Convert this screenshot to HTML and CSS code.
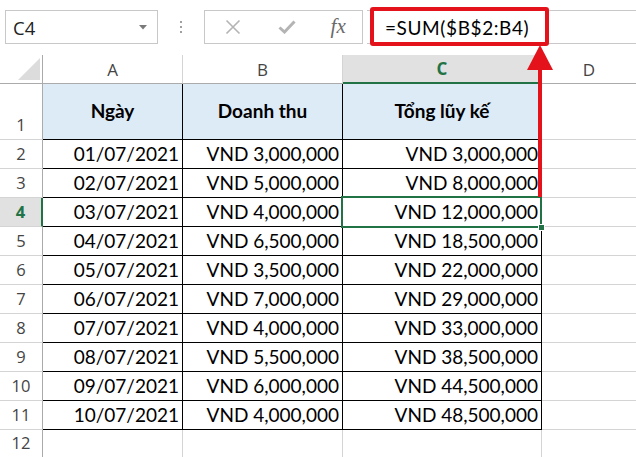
FILE: index.html
```html
<!DOCTYPE html>
<html lang="vi">
<head>
<meta charset="utf-8">
<title>Tổng lũy kế</title>
<link rel="stylesheet" href="styles.css">
</head>
<body>
<div class="app">
  <div class="formula-row">
    <div class="namebox">
      <span class="namebox-text">C4</span>
      <svg class="dd" width="8" height="5" viewBox="0 0 8 5"><path d="M0 0H8L4 4.5Z" fill="#7a7a7a"/></svg>
    </div>
    <div class="grip"><i></i><i></i><i></i></div>
    <div class="fbtns">
      <span class="fbtn b1"><svg width="16" height="16" viewBox="0 0 16 16"><path d="M1.5 1.5L14.5 14.5M14.5 1.5L1.5 14.5" stroke="#b4b4b4" stroke-width="1.6" fill="none"/></svg></span>
      <span class="fbtn b2"><svg width="18" height="14" viewBox="0 0 18 14"><path d="M1.5 7.5L6.5 12L16.5 1.5" stroke="#b4b4b4" stroke-width="3" fill="none"/></svg></span>
      <span class="fbtn b3 fx">fx</span>
    </div>
    <div class="finput"><span class="ftext">=SUM($B$2:B4)</span></div>
  </div>

  <div class="grid">
    <div class="cell corner"><svg width="42" height="28" viewBox="0 0 42 28"><path d="M18 25H40V3Z" fill="#dcdcdc"/></svg></div>
    <div class="cell ch">A</div>
    <div class="cell ch">B</div>
    <div class="cell ch ch-sel">C</div>
    <div class="cell ch ch-last">D</div>

    <div class="cell rh">1</div>
    <div class="cell t head">Ngày</div>
    <div class="cell t head">Doanh thu</div>
    <div class="cell t head">Tổng lũy kế</div>
    <div class="cell g"></div>

    <div class="cell rh">2</div>
    <div class="cell t num">01/07/2021</div>
    <div class="cell t num">VND 3,000,000</div>
    <div class="cell t num">VND 3,000,000</div>
    <div class="cell g"></div>

    <div class="cell rh">3</div>
    <div class="cell t num">02/07/2021</div>
    <div class="cell t num">VND 5,000,000</div>
    <div class="cell t num">VND 8,000,000</div>
    <div class="cell g"></div>

    <div class="cell rh rh-sel">4</div>
    <div class="cell t num">03/07/2021</div>
    <div class="cell t num">VND 4,000,000</div>
    <div class="cell t num active">VND 12,000,000<span class="handle"></span></div>
    <div class="cell g"></div>

    <div class="cell rh">5</div>
    <div class="cell t num">04/07/2021</div>
    <div class="cell t num">VND 6,500,000</div>
    <div class="cell t num">VND 18,500,000</div>
    <div class="cell g"></div>

    <div class="cell rh">6</div>
    <div class="cell t num">05/07/2021</div>
    <div class="cell t num">VND 3,500,000</div>
    <div class="cell t num">VND 22,000,000</div>
    <div class="cell g"></div>

    <div class="cell rh">7</div>
    <div class="cell t num">06/07/2021</div>
    <div class="cell t num">VND 7,000,000</div>
    <div class="cell t num">VND 29,000,000</div>
    <div class="cell g"></div>

    <div class="cell rh">8</div>
    <div class="cell t num">07/07/2021</div>
    <div class="cell t num">VND 4,000,000</div>
    <div class="cell t num">VND 33,000,000</div>
    <div class="cell g"></div>

    <div class="cell rh">9</div>
    <div class="cell t num">08/07/2021</div>
    <div class="cell t num">VND 5,500,000</div>
    <div class="cell t num">VND 38,500,000</div>
    <div class="cell g"></div>

    <div class="cell rh">10</div>
    <div class="cell t num">09/07/2021</div>
    <div class="cell t num">VND 6,000,000</div>
    <div class="cell t num">VND 44,500,000</div>
    <div class="cell g"></div>

    <div class="cell rh">11</div>
    <div class="cell t num">10/07/2021</div>
    <div class="cell t num">VND 4,000,000</div>
    <div class="cell t num">VND 48,500,000</div>
    <div class="cell g"></div>

    <div class="cell rh">12</div>
    <div class="cell g"></div>
    <div class="cell g"></div>
    <div class="cell g"></div>
    <div class="cell g"></div>
  </div>

  <div class="callout"></div>
  <svg class="arrow" width="32" height="155" viewBox="0 0 32 155">
    <path d="M16 1L3 26H29Z" fill="#e4121b"/>
    <rect x="14" y="25" width="4" height="128" fill="#e4121b"/>
  </svg>
</div>
</body>
</html>
```
FILE: styles.css
```css
* { box-sizing: border-box; }
html, body { margin: 0; padding: 0; background: #fff; }
.app {
  position: relative;
  width: 636px;
  height: 457px;
  overflow: hidden;
  font-family: Lato, "Noto Sans", sans-serif;
  color: #000;
}

/* formula bar */
.formula-row {
  display: flex;
  padding-top: 10px;
  height: 44px;
}
.namebox {
  margin-left: 5px;
  width: 153px;
  height: 34px;
  border: 1px solid #c8c8c8;
  display: flex;
  align-items: center;
  justify-content: space-between;
  padding: 0 10px 0 7px;
}
.namebox-text {
  font-family: "Open Sans", sans-serif;
  font-size: 18.5px;
  color: #222;
}
.dd { margin-top: 1px; }
.grip {
  width: 46px;
  display: flex;
  flex-direction: column;
  align-items: center;
  justify-content: center;
  gap: 3px;
}
.grip i {
  display: block;
  width: 2px;
  height: 2px;
  background: #a0a0a0;
}
.fbtns {
  width: 159px;
  height: 34px;
  border: 1px solid #c8c8c8;
  display: flex;
  align-items: center;
}
.fbtn {
  display: flex;
  align-items: center;
  justify-content: center;
  height: 100%;
}
.b1 { width: 56px; }
.b2 { width: 54px; }
.b3 { width: 48px; }
.fx {
  font-family: "Liberation Serif", serif;
  font-style: italic;
  font-size: 21px;
  color: #6a6a6a;
  padding-bottom: 2px;
}
.finput {
  flex: 1;
  margin-left: 4px;
  height: 34px;
  border-top: 1px solid #c8c8c8;
  border-bottom: 1px solid #c8c8c8;
  display: flex;
  align-items: center;
  padding-left: 18px;
}
.ftext {
  font-size: 19px;
  color: #000;
  letter-spacing: 0.6px;
}

/* grid */
.grid {
  margin-top: 11px;
  display: grid;
  grid-template-columns: 43px 140px 160px 199px 94px;
  grid-template-rows: 29px 56px repeat(10, 29px) 28px;
}
.cell {
  border-right: 1px solid #d4d4d4;
  border-bottom: 1px solid #d4d4d4;
  display: flex;
  align-items: flex-end;
  white-space: nowrap;
}
.corner {
  border-right: 1px solid #ababab;
  border-bottom: 1px solid #ababab;
}
.corner svg { display: block; }
.ch {
  justify-content: center;
  align-items: center;
  border-bottom: 1px solid #ababab;
  font-family: "Open Sans", sans-serif;
  font-size: 17px;
  color: #444;
}
.ch-sel {
  background: #e1e1e1;
  border-bottom: 2px solid #217346;
  color: #217346;
  font-weight: 700;
}
.ch-last { border-right: none; }
.rh {
  justify-content: center;
  border-right: 1px solid #ababab;
  padding-bottom: 3px;
  font-family: "Open Sans", sans-serif;
  font-size: 16.5px;
  color: #444;
}
.rh-sel {
  background: #e1e1e1;
  border-right: 2px solid #217346;
  color: #217346;
  font-weight: 700;
}
.t {
  border-right: 1px solid #000;
  border-bottom: 1px solid #000;
  font-size: 19px;
}
.head {
  background: #ddebf7;
  font-weight: 700;
  justify-content: center;
  align-items: center;
  padding-bottom: 3px;
}
.num {
  justify-content: flex-end;
  padding: 0 3px 3px 0;
}
.grid > .g:nth-child(5n) { border-right: none; }
.active { position: relative; }
.active::after {
  content: "";
  position: absolute;
  top: -2px;
  left: -2px;
  right: -1px;
  bottom: -2px;
  border: 2px solid #217346;
  pointer-events: none;
}
.handle {
  position: absolute;
  right: -4px;
  bottom: -5px;
  width: 7px;
  height: 7px;
  background: #217346;
  border: 1px solid #fff;
  z-index: 2;
}

/* annotation */
.callout {
  position: absolute;
  left: 370px;
  top: 7px;
  width: 179px;
  height: 39px;
  border: 4px solid #e4121b;
  border-radius: 3px;
}
.arrow {
  position: absolute;
  left: 524px;
  top: 44px;
}
```
